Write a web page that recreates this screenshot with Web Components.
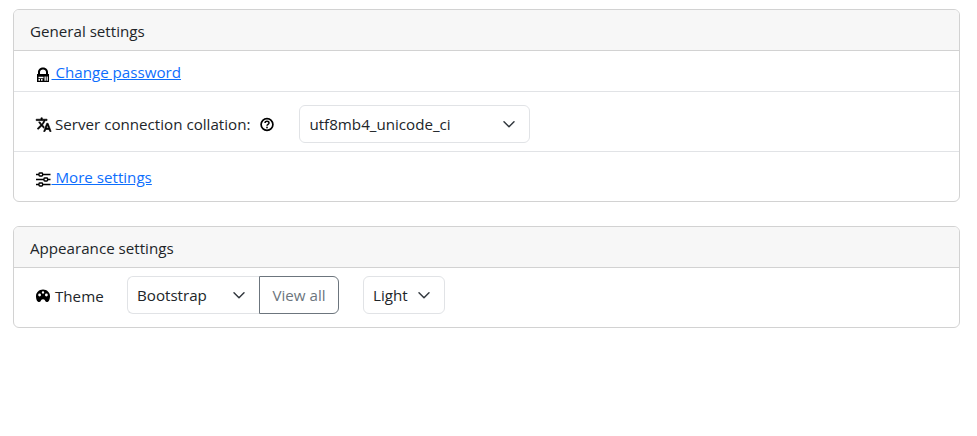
<!DOCTYPE html>
<html lang="en"><head><meta charset="utf-8"><title>Settings</title>
<style>
html,body{margin:0;background:#fff}
body{padding:9px 17px 0 13px;font:15.15px/24px "Open Sans","Noto Sans",sans-serif;color:#212529}
</style></head><body>
<settings-card heading="General settings">
  <settings-row><a-link><pma-icon name="lock" style="margin-right:.5px"></pma-icon> Change password</a-link></settings-row>
  <settings-row tall><pma-icon name="translate"></pma-icon><span style="margin-left:4px">Server connection collation:</span><pma-icon name="help" style="margin:0 24.500px 0 9.500px"></pma-icon><select-box width="231">utf8mb4_unicode_ci</select-box></settings-row>
  <settings-row last><a-link><pma-icon name="sliders" style="margin-right:.5px"></pma-icon> More settings</a-link></settings-row>
</settings-card>
<settings-card heading="Appearance settings" style="margin-top:24px">
  <settings-row theme><pma-icon name="palette" style="margin-top:2px"></pma-icon><span style="margin:2px 24px 0 4px;width:48px">Theme</span><select-box width="132" joined>Bootstrap</select-box><view-button>View all</view-button><select-box width="82" style="margin-left:24px">Light</select-box></settings-row>
</settings-card>
<script>
const def=(n,html,ext)=>customElements.define(n,class extends HTMLElement{constructor(){super();this.attachShadow({mode:'open'}).innerHTML=html;}connectedCallback(){ext&&ext.call(this)}});
def('settings-card',`<style>:host{display:block;border:1px solid #d2d2d2;border-radius:6px;overflow:hidden}
#h{display:block;height:40px;line-height:42px;padding:0 16px;background:#f7f7f7;border-bottom:1px solid #d2d2d2}</style><div id="h"></div><slot></slot>`,function(){this.shadowRoot.getElementById('h').textContent=this.getAttribute('heading')});
def('settings-row',`<style>:host{display:flex;align-items:center;box-sizing:border-box;height:41px;padding:2px 22px 0;border-bottom:1px solid #e1e3e6}
:host([tall]){height:60px;padding:13px 22px 8px}:host([last]){border-bottom:0;height:49px;padding:0 22px}:host([theme]){height:59px;border-bottom:0;padding:8px 22px 13px}</style><slot></slot>`);
def('a-link',`<style>:host{display:inline-block;color:#0d6efd;text-decoration:underline;cursor:pointer;white-space:pre}</style><slot></slot>`);
def('select-box',`<style>:host{display:inline-flex;align-items:center;justify-content:space-between;box-sizing:border-box;height:38px;padding:0 12px 0 9px;border:1px solid #e1e3e6;border-radius:6px;background:#fff}
:host([joined]){border-radius:6px 0 0 6px;border-right:0}svg{display:block;flex:none}</style><slot></slot><svg width="16" height="16" viewBox="0 0 16 16"><path d="M3 5.700l5 5 5-5" fill="none" stroke="#343a40" stroke-width="1.500" stroke-linecap="round" stroke-linejoin="round"/></svg>`,function(){this.style.width=this.getAttribute('width')+'px'});
def('view-button',`<style>:host{display:inline-flex;align-items:center;justify-content:center;box-sizing:border-box;width:80px;height:38px;border:1px solid #6c757d;border-radius:0 6px 6px 0;color:#6c757d}</style><slot></slot>`);
const ICONS={
lock:`<path fill-rule="evenodd" d="M2 7V5C2 2.500 4.300.5 7 .5S12 2.500 12 5V7h1v8H1V7zM4 7h6V5C10 3.500 8.700 2.400 7 2.400S4 3.500 4 5zM2.500 9.800v1.400h5V9.800zM2.500 12v1.800h1.500V12zM5 12v1.800h1.500V12zM8.500 9.500v4.300h1.300V9.500zM10.600 9.500v4.300h1.200V9.500z"/>`,
translate:`<g transform="translate(-.5 -.5) scale(.68)" stroke="#000" stroke-width="1"><path d="M12.870 15.070l-2.540-2.510.03-.03c1.740-1.940 2.980-4.170 3.710-6.530H17V4h-7V2H8v2H1v1.990h11.170C11.500 7.920 10.440 9.750 9 11.350 8.070 10.320 7.300 9.190 6.690 8h-2c.73 1.630 1.730 3.170 2.980 4.560l-5.090 5.020L4 19l5-5 3.110 3.110.76-2.040zM18.500 10h-2L12 22h2l1.120-3h4.750L21 22h2l-4.500-12zm-2.620 7l1.620-4.330L19.120 17h-3.240z"/></g>`,
help:`<circle cx="7" cy="7.500" r="5.900" fill="none" stroke="#000" stroke-width="1.700"/><path d="M5 6.100c0-1.200.9-1.900 2-1.900s2 .7 2 1.700c0 1.500-2 1.400-2 2.800" fill="none" stroke="#000" stroke-width="1.500"/><rect x="6.200" y="9.700" width="1.600" height="1.600"/>`,
sliders:`<g fill="none" stroke="#000" stroke-width="1.700"><path d="M0 2.500h3M7 2.500H14.500M0 7.500h8M12 7.500h2.500M0 12.500h3M7 12.500H14.500"/><rect x="3" y="1" width="3.600" height="3" rx=".8" stroke-width="1.300"/><rect x="8" y="6" width="3.600" height="3" rx=".8" stroke-width="1.300"/><rect x="3" y="11" width="3.600" height="3" rx=".8" stroke-width="1.300"/></g>`,
palette:`<path fill-rule="evenodd" d="M7 .5C10.900.5 14 3.400 14 7.200c0 2.500-.7 4.300-1.700 5.300-.8.8-2.400.9-2.900-.2C9 11 8.300 10.300 7 10.300s-2 .7-2.400 2c-.5 1.100-2.100 1-2.900.2C.7 11.500 0 9.700 0 7.200 0 3.400 3.100.5 7 .5zM7 2.200a1.200 1.200 0 1 0 0 2.400 1.200 1.200 0 0 0 0-2.400zM3.600 4.600a1.400 1.400 0 1 0 0 2.800 1.400 1.400 0 0 0 0-2.800zM10.400 4.600a1.400 1.400 0 1 0 0 2.800 1.400 1.400 0 0 0 0-2.800z"/>`};
customElements.define('pma-icon',class extends HTMLElement{constructor(){super();this.attachShadow({mode:'open'})}
connectedCallback(){this.shadowRoot.innerHTML=`<style>:host{display:inline-block;width:15px;height:15px;vertical-align:-4px;flex:none}svg{display:block}</style><svg width="15" height="15" viewBox="0 0 15 15" overflow="visible" fill="#000">${ICONS[this.getAttribute('name')]}</svg>`}});
</script></body></html>
